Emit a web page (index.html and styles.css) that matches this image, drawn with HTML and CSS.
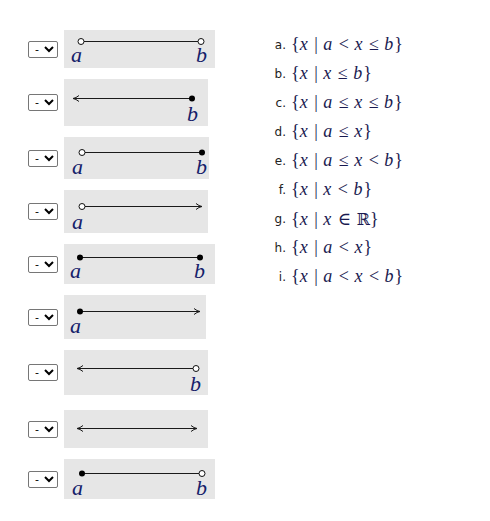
FILE: index.html
```html
<!DOCTYPE html>
<html>
<head>
<meta charset="utf-8">
<link rel="stylesheet" href="styles.css">
</head>
<body>
<div class="page">
  <div class="rows">
    <div class="row">
      <select class="pick"><option>-</option></select>
      <div class="box w151 h38">
        <svg width="151" height="38">
          <line x1="17" y1="11.5" x2="137" y2="11.5" class="ln"/>
          <circle cx="17" cy="11.5" r="3" class="open"/>
          <circle cx="137" cy="11.5" r="3" class="open"/>
          <text x="7" y="32" class="lbl">a</text>
          <text x="132" y="32" class="lbl">b</text>
        </svg>
      </div>
    </div>
    <div class="row">
      <select class="pick"><option>-</option></select>
      <div class="box w144 h47">
        <svg width="144" height="47">
          <line x1="9" y1="19.5" x2="128" y2="19.5" class="ln"/>
          <path d="M15 16.5 Q12 19 9 19.5 Q12 20 15 22.5" class="head"/>
          <circle cx="128" cy="19.5" r="3" class="fill"/>
          <text x="123" y="42" class="lbl">b</text>
        </svg>
      </div>
    </div>
    <div class="row">
      <select class="pick"><option>-</option></select>
      <div class="box w145 h42">
        <svg width="145" height="42">
          <line x1="18" y1="15.5" x2="138" y2="15.5" class="ln"/>
          <circle cx="18" cy="15.5" r="3" class="open"/>
          <circle cx="138" cy="15.5" r="3" class="fill"/>
          <text x="8" y="37" class="lbl">a</text>
          <text x="132" y="37" class="lbl">b</text>
        </svg>
      </div>
    </div>
    <div class="row">
      <select class="pick"><option>-</option></select>
      <div class="box w144 h43">
        <svg width="144" height="43">
          <line x1="18" y1="16.5" x2="138" y2="16.5" class="ln"/>
          <circle cx="18" cy="16.5" r="3" class="open"/>
          <path d="M132 13.5 Q135 16 138 16.5 Q135 17 132 19.5" class="head"/>
          <text x="8" y="39" class="lbl">a</text>
        </svg>
      </div>
    </div>
    <div class="row">
      <select class="pick"><option>-</option></select>
      <div class="box w151 h40">
        <svg width="151" height="40">
          <line x1="16" y1="13.5" x2="136" y2="13.5" class="ln"/>
          <circle cx="16" cy="13.5" r="3" class="fill"/>
          <circle cx="136" cy="13.5" r="3" class="fill"/>
          <text x="6" y="34" class="lbl">a</text>
          <text x="130" y="34" class="lbl">b</text>
        </svg>
      </div>
    </div>
    <div class="row">
      <select class="pick"><option>-</option></select>
      <div class="box w142 h44">
        <svg width="142" height="44">
          <line x1="16" y1="16.5" x2="136" y2="16.5" class="ln"/>
          <circle cx="16" cy="16.5" r="3" class="fill"/>
          <path d="M130 13.5 Q133 16 136 16.5 Q133 17 130 19.5" class="head"/>
          <text x="6" y="38" class="lbl">a</text>
        </svg>
      </div>
    </div>
    <div class="row">
      <select class="pick"><option>-</option></select>
      <div class="box w144 h45">
        <svg width="144" height="45">
          <line x1="13" y1="18.5" x2="132" y2="18.5" class="ln"/>
          <path d="M19 15.5 Q16 18 13 18.5 Q16 19 19 21.5" class="head"/>
          <circle cx="132" cy="18.5" r="3" class="open"/>
          <text x="126" y="41" class="lbl">b</text>
        </svg>
      </div>
    </div>
    <div class="row gap-extra">
      <select class="pick"><option>-</option></select>
      <div class="box w144 h38">
        <svg width="144" height="38">
          <line x1="13" y1="18.5" x2="133" y2="18.5" class="ln"/>
          <path d="M19 15.5 Q16 18 13 18.5 Q16 19 19 21.5" class="head"/>
          <path d="M127 15.5 Q130 18 133 18.5 Q130 19 127 21.5" class="head"/>
        </svg>
      </div>
    </div>
    <div class="row">
      <select class="pick"><option>-</option></select>
      <div class="box w151 h40">
        <svg width="151" height="40">
          <line x1="18" y1="14.5" x2="138" y2="14.5" class="ln"/>
          <circle cx="18" cy="14.5" r="3" class="fill"/>
          <circle cx="138" cy="14.5" r="3" class="open"/>
          <text x="8" y="36" class="lbl">a</text>
          <text x="132" y="36" class="lbl">b</text>
        </svg>
      </div>
    </div>
  </div>

  <div class="choices">
    <span class="key">a.</span><span class="m">{<i>x</i><span class="rel">|</span><i>a</i><span class="rel">&lt;</span><i>x</i><span class="rel">≤</span><i>b</i>}</span>
    <span class="key">b.</span><span class="m">{<i>x</i><span class="rel">|</span><i>x</i><span class="rel">≤</span><i>b</i>}</span>
    <span class="key">c.</span><span class="m">{<i>x</i><span class="rel">|</span><i>a</i><span class="rel">≤</span><i>x</i><span class="rel">≤</span><i>b</i>}</span>
    <span class="key">d.</span><span class="m">{<i>x</i><span class="rel">|</span><i>a</i><span class="rel">≤</span><i>x</i>}</span>
    <span class="key">e.</span><span class="m">{<i>x</i><span class="rel">|</span><i>a</i><span class="rel">≤</span><i>x</i><span class="rel">&lt;</span><i>b</i>}</span>
    <span class="key">f.</span><span class="m">{<i>x</i><span class="rel">|</span><i>x</i><span class="rel">&lt;</span><i>b</i>}</span>
    <span class="key">g.</span><span class="m">{<i>x</i><span class="rel">|</span><i>x</i><span class="rel">∈</span><span class="bb">ℝ</span>}</span>
    <span class="key">h.</span><span class="m">{<i>x</i><span class="rel">|</span><i>a</i><span class="rel">&lt;</span><i>x</i>}</span>
    <span class="key">i.</span><span class="m">{<i>x</i><span class="rel">|</span><i>a</i><span class="rel">&lt;</span><i>x</i><span class="rel">&lt;</span><i>b</i>}</span>
  </div>
</div>
</body>
</html>
```
FILE: styles.css
```css
html, body {
  margin: 0;
  padding: 0;
  background: #ffffff;
}

.page {
  display: flex;
  align-items: flex-start;
  padding: 30px 0 0 28px;
  font-family: "DejaVu Sans", Verdana, sans-serif;
}

.rows {
  display: flex;
  flex-direction: column;
  gap: 11px;
  width: 187px;
}

.row {
  display: flex;
  align-items: center;
  gap: 6px;
}

.gap-extra {
  margin-top: 4px;
}

.pick {
  width: 30px;
  height: 17px;
  font-family: "DejaVu Sans", sans-serif;
  font-size: 11px;
  padding: 0 0 0 2px;
  border: 1px solid #767676;
  border-radius: 2px;
  background: #ffffff;
  color: #000;
  flex: none;
}

.box {
  background: #e6e6e6;
  flex: none;
}

.box svg {
  display: block;
}

.w151 { width: 151px; }
.w145 { width: 145px; }
.w144 { width: 144px; }
.w142 { width: 142px; }
.h38 { height: 38px; }
.h40 { height: 40px; }
.h42 { height: 42px; }
.h43 { height: 43px; }
.h44 { height: 44px; }
.h45 { height: 45px; }
.h47 { height: 47px; }

.ln {
  stroke: #1a1a1a;
  stroke-width: 1;
}

.head {
  fill: none;
  stroke: #1a1a1a;
  stroke-width: 1;
}

.open {
  fill: #ffffff;
  stroke: #111;
  stroke-width: 1;
}

.fill {
  fill: #000;
}

.lbl {
  font-family: "Liberation Serif", "DejaVu Serif", serif;
  font-style: italic;
  font-size: 22px;
  fill: #15206a;
}

.choices {
  margin-left: 57px;
  display: grid;
  grid-template-columns: 14px auto;
  column-gap: 5px;
  grid-auto-rows: 29px;
  align-items: center;
}

.key {
  font-size: 12px;
  color: #222;
  text-align: right;
  white-space: nowrap;
}

.m {
  font-family: "Liberation Serif", "DejaVu Serif", serif;
  font-size: 18px;
  color: #1a1a50;
  white-space: nowrap;
}

.m i {
  font-style: italic;
  padding-right: 1px;
}

.rel {
  margin: 0 5.5px;
}

.bb {
  font-family: "DejaVu Serif", serif;
  font-size: 16px;
}
```
